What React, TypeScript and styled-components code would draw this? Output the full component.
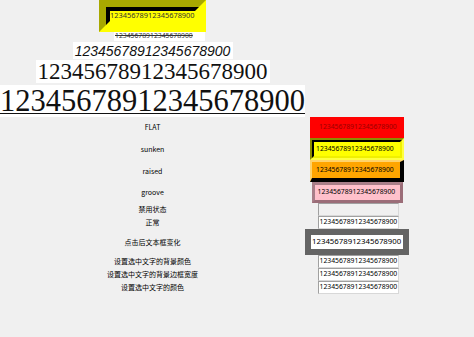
import styled, { createGlobalStyle } from 'styled-components';

const GlobalStyle = createGlobalStyle`
  html, body {
    margin: 0;
    padding: 0;
    background: #f0f0f0;
  }
  body {
    font-family: "Noto Sans", "Noto Sans CJK SC", sans-serif;
  }
`;

const DIGITS = '12345678912345678900';

const Window = styled.div`
  width: 474px;
  height: 337px;
  background: #f0f0f0;
  overflow: hidden;
`;

const Grid = styled.div`
  display: grid;
  grid-template-columns: 305px 104px;
  justify-items: center;
  align-items: center;
`;

const Wide = styled.div`
  grid-column: 1;
`;

/* box with a two-tone bevel, nested once for the inner ring */
const Bevel = styled.div<{ $w: number; $h: number; $outer: number; $bg: string; $dark: string; $light: string }>`
  box-sizing: border-box;
  width: ${p => p.$w}px;
  height: ${p => p.$h}px;
  border-style: solid;
  border-width: ${p => p.$outer}px;
  border-color: ${p => `${p.$dark} ${p.$light} ${p.$light} ${p.$dark}`};
  background: ${p => p.$bg};
`;

const BevelInner = styled.div<{ $inner: number; $bg: string; $dark: string; $light: string; $pad?: number }>`
  box-sizing: border-box;
  height: 100%;
  border-style: solid;
  border-width: ${p => p.$inner}px;
  border-color: ${p => `${p.$dark} ${p.$light} ${p.$light} ${p.$dark}`};
  background: ${p => p.$bg};
  display: flex;
  align-items: center;
  padding-left: ${p => p.$pad ?? 0}px;
  overflow: hidden;
`;

const SmallText = styled.span<{ $color?: string; $size?: number }>`
  font-family: "Noto Sans", "Noto Sans CJK SC", sans-serif;
  font-size: ${p => p.$size ?? 6.8}px;
  line-height: 1;
  color: ${p => p.$color ?? '#000'};
  white-space: nowrap;
`;

const StrikeBox = styled.div`
  box-sizing: border-box;
  width: 91px;
  height: 9px;
  margin-left: 14px;
  background: #fff;
  display: flex;
  align-items: center;
  padding-left: 1px;
  font-family: "Noto Sans", sans-serif;
  font-size: 6.8px;
  line-height: 1;
  color: #333;
  text-decoration: line-through;
  overflow: hidden;
  white-space: nowrap;
`;

const TextLabel = styled.div<{ $w: number; $h: number; $size: number; $family: string; $italic?: boolean; $underline?: boolean }>`
  box-sizing: border-box;
  width: ${p => p.$w}px;
  height: ${p => p.$h}px;
  background: #fff;
  display: flex;
  align-items: center;
  justify-content: center;
  font-family: ${p => p.$family};
  font-size: ${p => p.$size}px;
  font-style: ${p => (p.$italic ? 'italic' : 'normal')};
  text-decoration: ${p => (p.$underline ? 'underline' : 'none')};
  text-decoration-thickness: 1px;
  text-underline-offset: 2px;
  line-height: 1;
  color: #111;
  white-space: nowrap;
  overflow: hidden;
`;

const Label = styled.div`
  grid-column: 1;
  font-family: "Noto Sans CJK SC", "Noto Sans", sans-serif;
  font-size: 7px;
  line-height: 1;
  color: #000;
  white-space: nowrap;
`;

const FlatEntry = styled.div`
  grid-column: 2;
  box-sizing: border-box;
  width: 94px;
  height: 21px;
  background: #ff0000;
  display: flex;
  align-items: center;
  padding-left: 9px;
`;

const RaisedEntry = styled.div`
  grid-column: 2;
  box-sizing: border-box;
  width: 94px;
  height: 22px;
  border-style: solid;
  border-width: 2px 4px 4px 2px;
  border-color: #ffd36a #000 #000 #ffd36a;
  background: #ffa500;
  display: flex;
  align-items: center;
  padding-left: 4px;
`;

const GrooveEntry = styled.div`
  grid-column: 2;
  box-sizing: border-box;
  width: 91px;
  height: 21px;
  border: 3px solid #9b6d78;
  border-top-color: #a87e88;
  border-left-color: #a87e88;
  background: #ffc0cb;
  display: flex;
  align-items: center;
  padding-left: 3px;
`;

const PlainEntry = styled.div<{ $disabled?: boolean }>`
  grid-column: 2;
  box-sizing: border-box;
  width: 81px;
  height: 13px;
  margin-left: 2px;
  border: 1px solid #d8d8d8;
  border-top-color: #a0a0a0;
  border-left-color: #a0a0a0;
  background: ${p => (p.$disabled ? '#f0f0f0' : '#fff')};
  display: flex;
  align-items: center;
  padding-left: 1px;
  overflow: hidden;
`;

const FocusFrame = styled.div`
  grid-column: 2;
  box-sizing: border-box;
  width: 104px;
  height: 26px;
  border: 6px solid #646464;
  background: #fff;
  display: flex;
  align-items: center;
  padding-left: 1px;
  overflow: hidden;
`;

const Cell = styled.div<{ $h: number }>`
  grid-column: 2;
  height: ${p => p.$h}px;
  display: flex;
  align-items: center;
`;

export default function App() {
  return (
    <Window>
      <GlobalStyle />
      <Grid>
        <Wide>
          <Bevel $w={107} $h={32} $outer={7} $bg="#ffff00" $dark="#a8a800" $light="#ffff00">
            <BevelInner $inner={4} $bg="#ffff00" $dark="#000" $light="#ffff00">
              <SmallText $color="#333" $size={7.4}>{DIGITS}</SmallText>
            </BevelInner>
          </Bevel>
        </Wide>
        <Wide>
          <StrikeBox>{DIGITS}</StrikeBox>
        </Wide>
        <Wide style={{ marginTop: 1 }}>
          <TextLabel $w={160} $h={17} $size={14} $family={'"Liberation Sans", sans-serif'} $italic>
            {DIGITS}
          </TextLabel>
        </Wide>
        <Wide style={{ marginTop: 1 }}>
          <TextLabel $w={234} $h={23} $size={23} $family={'"Liberation Serif", serif'}>
            {DIGITS}
          </TextLabel>
        </Wide>
        <Wide style={{ marginTop: 2 }}>
          <TextLabel $w={305} $h={32} $size={30.5} $family={'"Liberation Serif", serif'} $underline>
            {DIGITS}
          </TextLabel>
        </Wide>

        <Label>FLAT</Label>
        <FlatEntry>
          <SmallText $color="#9a0000">{DIGITS}</SmallText>
        </FlatEntry>

        <Label>sunken</Label>
        <Cell $h={22}>
          <Bevel $w={94} $h={22} $outer={2} $bg="#ffff00" $dark="#8c8c00" $light="#ffff40">
            <BevelInner $inner={2} $bg="#ffff00" $dark="#000" $light="#f0f000" $pad={2}>
              <SmallText>{DIGITS}</SmallText>
            </BevelInner>
          </Bevel>
        </Cell>

        <Label>raised</Label>
        <RaisedEntry>
          <SmallText>{DIGITS}</SmallText>
        </RaisedEntry>

        <Label>groove</Label>
        <GrooveEntry>
          <SmallText>{DIGITS}</SmallText>
        </GrooveEntry>

        <Label>禁用状态</Label>
        <PlainEntry $disabled />

        <Label>正常</Label>
        <PlainEntry>
          <SmallText>{DIGITS}</SmallText>
        </PlainEntry>

        <Label>点击后文本框变化</Label>
        <FocusFrame>
          <SmallText $size={7.8}>{DIGITS}</SmallText>
        </FocusFrame>

        <Label>设置选中文字的背景颜色</Label>
        <PlainEntry>
          <SmallText>{DIGITS}</SmallText>
        </PlainEntry>

        <Label>设置选中文字的背景边框宽度</Label>
        <PlainEntry>
          <SmallText>{DIGITS}</SmallText>
        </PlainEntry>

        <Label>设置选中文字的颜色</Label>
        <PlainEntry>
          <SmallText>{DIGITS}</SmallText>
        </PlainEntry>
      </Grid>
    </Window>
  );
}
